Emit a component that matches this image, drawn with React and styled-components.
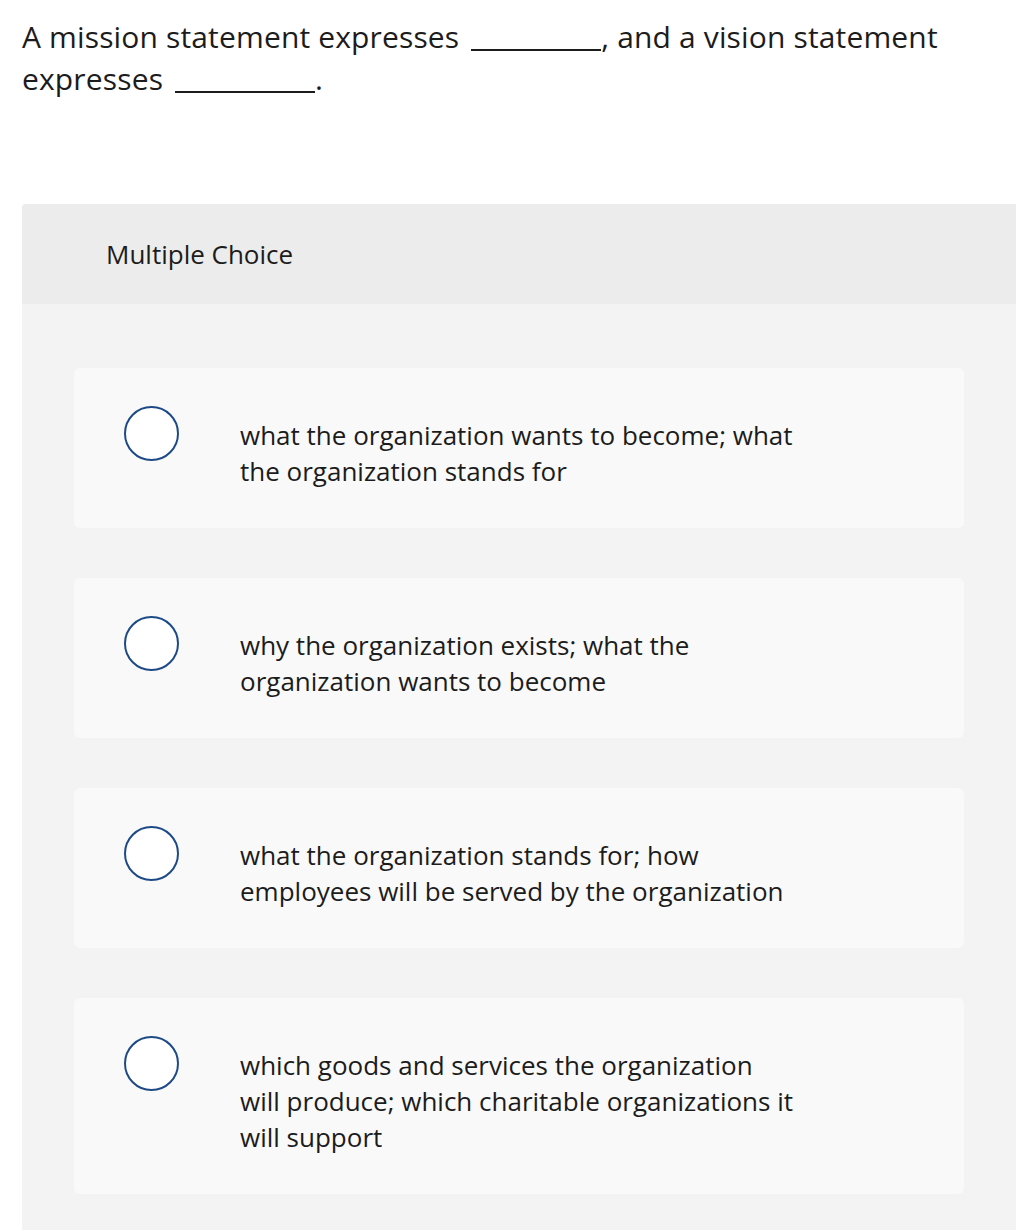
import React from "react";
import styled, { createGlobalStyle } from "styled-components";

const Global = createGlobalStyle`
  html, body { margin: 0; padding: 0; background: #ffffff; }
  body { font-family: "Open Sans", "Lato", sans-serif; color: #1c1c1c; }
`;

const Page = styled.div`
  padding: 16px 0 0 22px;
  width: 994px;
`;

const Question = styled.p`
  margin: 0;
  font-size: 30px;
  line-height: 42px;
  width: 940px;
  letter-spacing: 0.15px;
`;

const Blank = styled.span`
  display: inline-block;
  width: ${(p) => p.$w}px;
  height: 0;
  margin-left: 12px;
  border-bottom: 2px solid #1c1c1c;
  vertical-align: -3px;
`;

const Panel = styled.section`
  margin-top: 104px;
  border-radius: 4px 0 0 0;
  overflow: hidden;
  background: #f3f3f3;
`;

const Header = styled.div`
  height: 100px;
  background: #ececec;
  display: flex;
  align-items: center;
  padding-left: 84px;
  font-size: 26px;
`;

const List = styled.div`
  display: flex;
  flex-direction: column;
  gap: 50px;
  padding: 64px 52px 36px 52px;
`;

const Card = styled.label`
  display: flex;
  align-items: flex-start;
  background: #f9f9f9;
  border-radius: 6px;
  padding: 38px 0 39px 50px;
  min-height: 83px;
`;

const Radio = styled.span`
  flex: none;
  width: 51px;
  height: 51px;
  border: 2px solid #1d4a86;
  border-radius: 50%;
  background: #ffffff;
`;

const OptionText = styled.span`
  margin: 11px 0 0 61px;
  width: 555px;
  font-size: 26px;
  line-height: 36px;
`;

const options = [
  "what the organization wants to become; what the organization stands for",
  "why the organization exists; what the organization wants to become",
  "what the organization stands for; how employees will be served by the organization",
  "which goods and services the organization will produce; which charitable organizations it will support",
];

export default function App() {
  return (
    <>
      <Global />
      <Page>
        <Question>
          A mission statement expresses<Blank $w={130} />, and a vision statement
          expresses<Blank $w={140} />.
        </Question>
        <Panel>
          <Header>Multiple Choice</Header>
          <List>
            {options.map((o) => (
              <Card key={o}>
                <Radio />
                <OptionText>{o}</OptionText>
              </Card>
            ))}
          </List>
        </Panel>
      </Page>
    </>
  );
}
